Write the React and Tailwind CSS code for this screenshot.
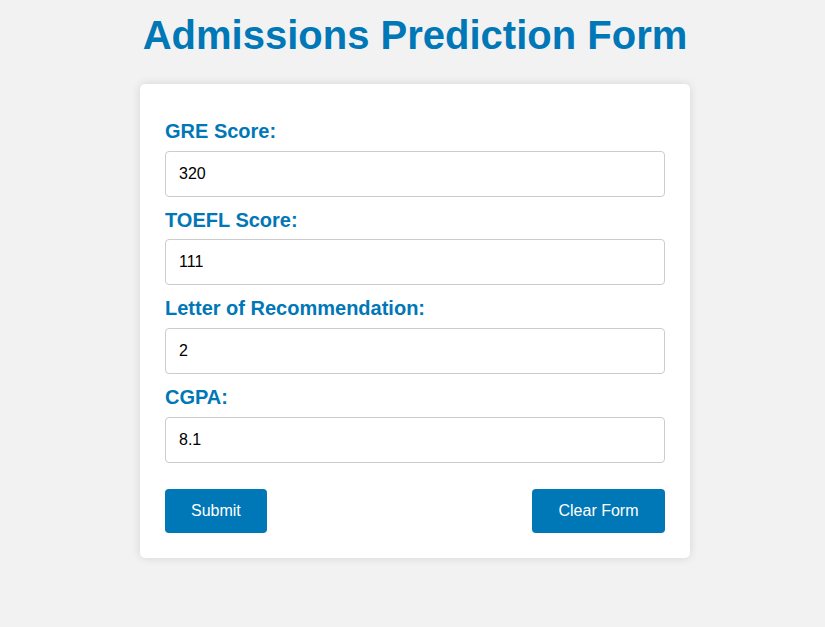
import React from "react";

const fields = [
  { label: "GRE Score:", value: "320" },
  { label: "TOEFL Score:", value: "111" },
  { label: "Letter of Recommendation:", value: "2" },
  { label: "CGPA:", value: "8.1" },
];

export default function App() {
  return (
    <div
      className="min-h-[627px] w-full bg-[#f2f2f2] flex flex-col items-center pl-[5px]"
      style={{ fontFamily: '"Liberation Sans", Arial, sans-serif' }}
    >
      <h1 className="mt-[12px] mb-[26px] text-[40px] leading-[46px] font-bold text-[#0077b6]">
        Admissions Prediction Form
      </h1>
      <div className="w-[550px] bg-white rounded-[5px] shadow-[0_0_10px_rgba(0,0,0,0.12)] px-[25px] pt-[24px] pb-[25px]">
        {fields.map((f) => (
          <div key={f.label} className="flex flex-col">
            <label className="mt-[12px] mb-[7.67px] text-[20px] leading-[23px] font-bold text-[#0077b6]">
              {f.label}
            </label>
            <input
              type="text"
              defaultValue={f.value}
              className="h-[46px] w-full border border-[#cccccc] rounded-[4px] px-[13px] text-[16px] text-black bg-white outline-none"
            />
          </div>
        ))}
        <div className="mt-[26px] flex justify-between">
          <button className="h-[44px] px-[26px] rounded-[4px] bg-[#0077b6] text-white text-[16px]">
            Submit
          </button>
          <button className="h-[44px] px-[26.5px] rounded-[4px] bg-[#0077b6] text-white text-[16px]">
            Clear Form
          </button>
        </div>
      </div>
    </div>
  );
}
